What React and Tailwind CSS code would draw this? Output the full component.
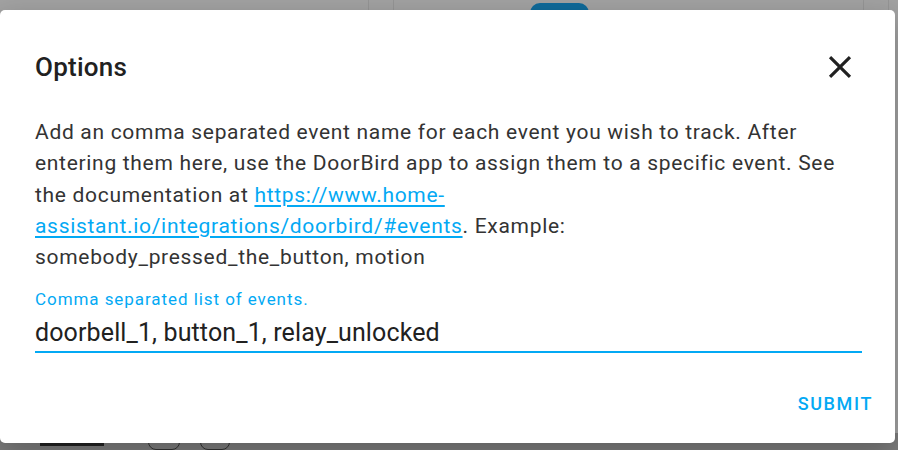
import React from 'react'

const tiles = [
  { gap: 0, w: 29, c: 'bg-[#1b6079]' },
  { gap: 11, w: 29, c: 'bg-[#0f3f50]' },
  { gap: 0, w: 37, c: 'bg-[#7a3a1f]' },
  { gap: 8, w: 20, c: 'bg-[#7a3a1f]' },
  { gap: 0, w: 29, c: 'bg-[#1b6079]' },
  { gap: 0, w: 20, c: 'bg-[#7a3a1f]' },
  { gap: 8, w: 20, c: 'bg-[#7a3a1f]' },
  { gap: 1, w: 29, c: 'bg-[#1b6079]' },
  { gap: 0, w: 20, c: 'bg-[#7a3a1f]' },
  { gap: 8, w: 20, c: 'bg-[#7a3a1f]' },
  { gap: 1, w: 29, c: 'bg-[#0f3f50]' },
  { gap: 0, w: 20, c: 'bg-[#7a3a1f]' },
]

// dimmed dashboard behind the dialog
function Backdrop() {
  return (
    <div className="absolute inset-0 flex flex-col bg-[#a2a2a2]">
      <div className="flex h-[443px]">
        <div className="w-[368px]" />
        <div className="w-px bg-[#959595]" />
        <div className="w-[24px]" />
        <div className="w-px bg-[#959595]" />
        <div className="flex-1 pl-[136px] pt-[3px]">
          <div className="h-[20px] w-[59px] rounded-full bg-[#0f6a9a]" />
        </div>
        <div className="w-px bg-[#959595]" />
        <div className="w-[24px]" />
        <div className="w-px bg-[#959595]" />
        <div className="w-[9px]" />
      </div>
      <div className="flex flex-1 items-start bg-[#7d7d7d] pt-[1px]">
        <div className="ml-[40px] h-[12px] w-[64px] rounded-t-lg bg-[#222]" />
        <div className="ml-[24px] h-[3px] w-[3px] rounded-full bg-[#222]" />
        <div className="ml-[17px] h-[16px] w-[32px] rounded-full border border-[#333]" />
        <div className="ml-[20px] h-[16px] w-[30px] rounded-full border border-[#333]" />
        <div className="ml-[229px] flex">
          {tiles.map((t, i) => (
            <div key={i} className={`h-[6px] ${t.c}`} style={{ marginLeft: t.gap, width: t.w }} />
          ))}
        </div>
      </div>
    </div>
  )
}

function CloseIcon() {
  return (
    <svg width="38" height="38" viewBox="0 0 24 24" fill="#212121">
      <path d="M19,6.41L17.59,5L12,10.59L6.41,5L5,6.41L10.59,12L5,17.59L6.41,19L12,13.41L17.59,19L19,17.59L13.41,12L19,6.41Z" />
    </svg>
  )
}

export default function App() {
  return (
    <div className="relative h-[450px] w-[898px] overflow-hidden font-['Roboto',sans-serif]">
      <Backdrop />
      <div className="absolute left-0 top-[10px] flex h-[433px] w-[895px] flex-col rounded-[5px] bg-white shadow-[0_10px_30px_rgba(0,0,0,0.25)]">
        <div className="flex items-center justify-between pl-[35px] pr-[36px] pt-[42px]">
          <h2 className="text-[26px] font-medium leading-[30px] tracking-[0.01em] text-[#212121]">Options</h2>
          <button className="-my-[4px]">
            <CloseIcon />
          </button>
        </div>
        <div className="pl-[35px] pr-[33px] pt-[35px]">
          <p className="text-[21px] leading-[31.25px] tracking-[0.033em] text-[#333]">
            Add an comma separated event name for each event you wish to track. After entering them here, use the DoorBird app to assign them to a specific event. See the documentation at{' '}
            <a href="#" className="text-[#03a9f4] underline underline-offset-[3px]">https://www.home-assistant.io/integrations/doorbird/#events</a>. Example: somebody_pressed_the_button, motion
          </p>
          <div className="mt-[16px] border-b-2 border-[#03a9f4] pb-[2px]">
            <label className="block text-[17px] leading-[20px] tracking-[0.055em] text-[#03a9f4]">Comma separated list of events.</label>
            <input
              className="mt-[8px] block w-full bg-transparent text-[25px] leading-[32px] tracking-[0.005em] text-[#212121] outline-none"
              defaultValue="doorbell_1, button_1, relay_unlocked"
            />
          </div>
        </div>
        <div className="mt-auto flex justify-end pb-[29px] pr-[22px]">
          <button className="text-[18px] font-medium uppercase leading-[20px] tracking-[0.09em] text-[#03a9f4]">Submit</button>
        </div>
      </div>
    </div>
  )
}
